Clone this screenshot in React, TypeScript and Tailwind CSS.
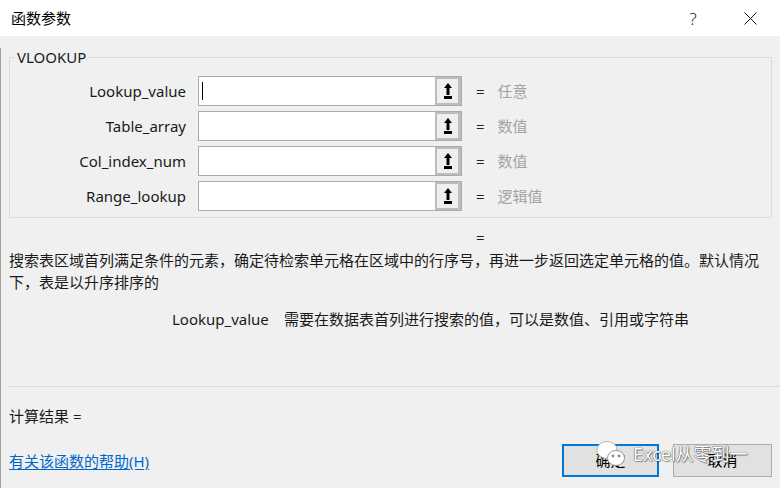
import React from 'react'

const rows = [
  { label: 'Lookup_value', value: '任意', focus: true },
  { label: 'Table_array', value: '数值' },
  { label: 'Col_index_num', value: '数值' },
  { label: 'Range_lookup', value: '逻辑值' },
]

function RefIcon() {
  return (
    <svg width="8" height="16" viewBox="0 0 8 16" className="block">
      <polygon points="4,0 8,5 0,5" fill="#000" />
      <rect x="2.5" y="4" width="3" height="8" fill="#000" />
      <rect x="0" y="13" width="8" height="3" fill="#000" />
    </svg>
  )
}

function CloseIcon() {
  return (
    <svg width="13" height="13" viewBox="0 0 13 13" className="block">
      <path d="M0.5 0.5 L12.5 12.5 M12.5 0.5 L0.5 12.5" stroke="#111" strokeWidth="1" fill="none" />
    </svg>
  )
}

function WechatLogo() {
  return (
    <svg width="30" height="28" viewBox="0 0 30 28" className="block">
      <ellipse cx="11" cy="10" rx="10" ry="8.5" fill="#fff" stroke="#b5b5b5" strokeWidth="1" />
      <ellipse cx="20" cy="18" rx="8.5" ry="7.5" fill="#fff" stroke="#9a9a9a" strokeWidth="1" />
      <circle cx="17" cy="16" r="1.4" fill="#8a8a8a" />
      <circle cx="23" cy="16" r="1.4" fill="#8a8a8a" />
    </svg>
  )
}

export default function App() {
  return (
    <div className="relative h-[488px] w-[780px] overflow-hidden bg-[#f0f0f0] font-['Noto_Sans','Noto_Sans_CJK_SC',sans-serif] text-[15px] text-[#1a1a1a]">
      {/* title bar */}
      <div className="flex h-9 items-center bg-white pl-[11px] pr-[23px]">
        <span className="text-[15px] leading-none text-black">函数参数</span>
        <div className="ml-auto flex items-center gap-[44px]">
          <span className="w-[14px] text-center text-[17px] font-light leading-none text-[#222]">?</span>
          <CloseIcon />
        </div>
      </div>

      <div className="h-[452px] border-l border-[#a3a3a3]">
        <fieldset className="ml-[8px] mt-[12px] w-[763px] border border-[#dcdcdc] px-0 pb-[6px] pt-[10px]">
          <legend className="ml-[5px] px-[2px] text-[15px] leading-[18px]">VLOOKUP</legend>
          <div className="flex flex-col gap-[5px]">
            {rows.map((row) => (
              <div key={row.label} className="flex h-[30px] items-center">
                <span className="w-[176px] text-right leading-none">{row.label}</span>
                <div className="ml-[12px] flex h-[30px] w-[264px] border border-[#ababab] bg-white">
                  <div className="flex flex-1 items-center pl-[3px]">
                    {row.focus && <span className="inline-block h-[18px] w-px bg-black" />}
                  </div>
                  <div className="flex w-[26px] items-center justify-center border-2 border-r-[3px] border-[#bcbcbc] bg-[#efefef]">
                    <RefIcon />
                  </div>
                </div>
                <span className="ml-[14px] leading-none text-[#222]">=</span>
                <span className="ml-[13px] leading-none text-[#a3a3a3]">{row.value}</span>
              </div>
            ))}
          </div>
        </fieldset>

        <div className="ml-[475px] mt-[8px] leading-[22px]">=</div>

        <p className="pl-[8px] pr-[9px] pt-[1px] leading-[22px]">
          搜索表区域首列满足条件的元素，确定待检索单元格在区域中的行序号，再进一步返回选定单元格的值。默认情况下，表是以升序排序的
        </p>

        <div className="ml-[171px] mt-[15px] flex leading-[22px]">
          <span className="w-[112px]">Lookup_value</span>
          <span>需要在数据表首列进行搜索的值，可以是数值、引用或字符串</span>
        </div>

        <div className="ml-[8px] mt-[56px] h-px bg-[#dadada]" />

        <div className="mt-[18px] pl-[8px] leading-[22px]">计算结果 =</div>

        <div className="mt-[17px] flex items-center pl-[8px] pr-[8px]">
          <a href="#" className="leading-[22px] text-[#0066cc] underline underline-offset-2">
            有关该函数的帮助(H)
          </a>
          <div className="ml-auto flex gap-[14px]">
            <button className="h-[33px] w-[97px] border-2 border-[#0078d7] bg-[#e1e1e1] leading-none text-black">
              确定
            </button>
            <button className="h-[33px] w-[99px] border border-[#adadad] bg-[#e1e1e1] leading-none text-black">
              取消
            </button>
          </div>
        </div>
      </div>

      {/* watermark */}
      <div className="pointer-events-none absolute left-[596px] top-[440px] flex items-center gap-[7px]">
        <WechatLogo />
        <span className="text-[18px] leading-none text-white [text-shadow:0_0_1px_#555,0_0_1px_#555,1px_1px_1px_rgba(0,0,0,0.35)]">
          Excel从零到一
        </span>
      </div>
    </div>
  )
}
